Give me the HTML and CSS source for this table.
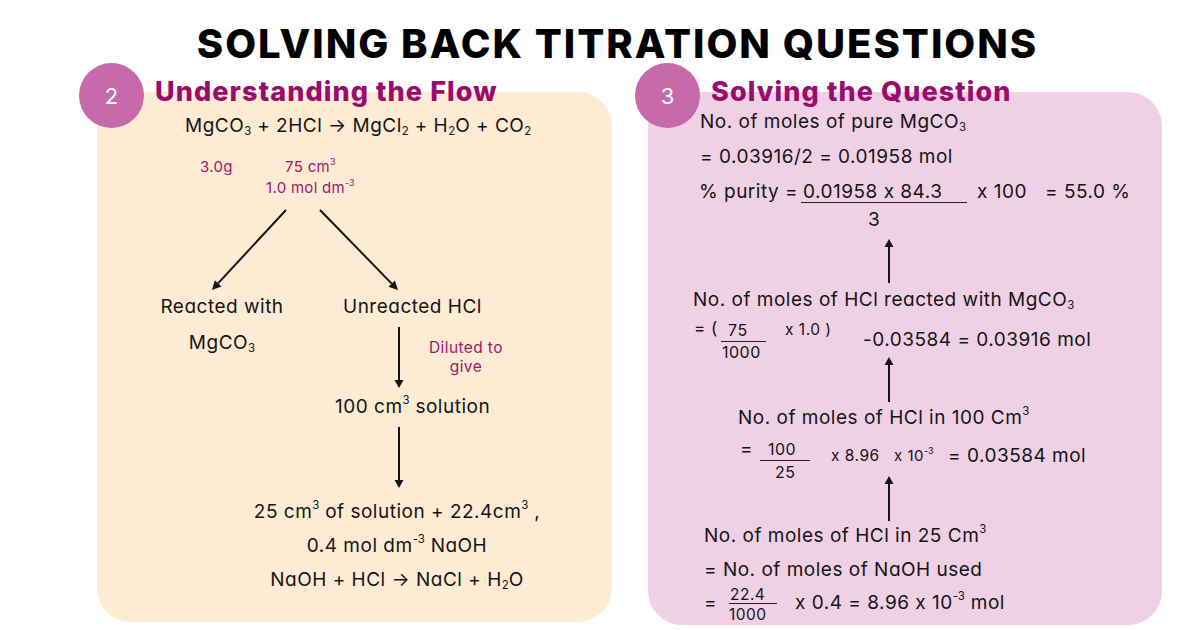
FILE: index.html
```html
<!DOCTYPE html>
<html lang="en">
<head>
<meta charset="utf-8">
<title>Solving Back Titration Questions</title>
<link rel="stylesheet" href="styles.css">
</head>
<body>
<main class="sheet">
  <h1 class="title">SOLVING BACK TITRATION QUESTIONS</h1>
  <div class="cols">
    <section class="card">
      <header class="card-head">
        <span class="badge">2</span>
        <h2 class="card-title">Understanding the Flow</h2>
      </header>
      <div class="panel panel-peach">
        <p class="eq">MgCO<sub>3</sub> + 2HCl → MgCl<sub>2</sub> + H<sub>2</sub>O + CO<sub>2</sub></p>
        <div class="qty">
          <span class="qty-mass">3.0g</span>
          <span class="qty-acid">75 cm<sup>3</sup><br>1.0 mol dm<sup>-3</sup></span>
        </div>
        <svg class="split" viewBox="0 0 515 83" aria-hidden="true">
          <line x1="189" y1="4" x2="121" y2="77.4" class="stroke"/>
          <polygon points="115,84 124.4,80.5 117.8,74.3" class="head"/>
          <line x1="223" y1="4" x2="294.7" y2="77.6" class="stroke"/>
          <polygon points="301,84 291.5,80.7 297.9,74.5" class="head"/>
        </svg>
        <div class="branch">
          <div class="branch-left">Reacted with<br>MgCO<sub>3</sub></div>
          <div class="branch-right">
            <div class="node">Unreacted HCl</div>
            <div class="step">
              <svg class="arrow-down" viewBox="0 0 14 61" aria-hidden="true">
                <line x1="7" y1="0" x2="7" y2="54" class="stroke"/>
                <polygon points="2.5,53 11.5,53 7,61" class="head"/>
              </svg>
              <span class="note">Diluted to<br>give</span>
            </div>
            <div class="node node-shift">100 cm<sup>3</sup> solution</div>
            <div class="step">
              <svg class="arrow-down" viewBox="0 0 14 61" aria-hidden="true">
                <line x1="7" y1="0" x2="7" y2="54" class="stroke"/>
                <polygon points="2.5,53 11.5,53 7,61" class="head"/>
              </svg>
            </div>
          </div>
        </div>
        <div class="result">
          <p>25 cm<sup>3</sup> of solution + 22.4cm<sup>3</sup> ,</p>
          <p>0.4 mol dm<sup>-3</sup> NaOH</p>
          <p>NaOH + HCl → NaCl + H<sub>2</sub>O</p>
        </div>
      </div>
    </section>

    <section class="card">
      <header class="card-head">
        <span class="badge">3</span>
        <h2 class="card-title">Solving the Question</h2>
      </header>
      <div class="panel panel-pink">
        <p class="line pad-52">No. of moles of pure MgCO<sub>3</sub></p>
        <p class="line pad-52">= 0.03916/2 = 0.01958 mol</p>
        <div class="calc calc-purity">
          <span class="lead-purity">% purity =</span>
          <span class="frac frac-purity"><span class="num">0.01958 x 84.3</span><span class="den">3</span></span>
          <span class="times-100">x 100</span>
          <span class="res">= 55.0 %</span>
        </div>
        <svg class="arrow-up up-1" viewBox="0 0 14 44" aria-hidden="true">
          <line x1="7" y1="7" x2="7" y2="44" class="stroke"/>
          <polygon points="2.5,8 11.5,8 7,0" class="head"/>
        </svg>
        <p class="line-34 pad-45">No. of moles of HCl reacted with MgCO<sub>3</sub></p>
        <div class="calc calc-hcl">
          <span class="lead-paren">= (</span>
          <span class="frac frac-75"><span class="num">75</span><span class="den">1000</span></span>
          <span class="times-10">x 1.0 )</span>
          <span class="res res-low">-0.03584 = 0.03916 mol</span>
        </div>
        <svg class="arrow-up up-2" viewBox="0 0 14 45" aria-hidden="true">
          <line x1="7" y1="7" x2="7" y2="45" class="stroke"/>
          <polygon points="2.5,8 11.5,8 7,0" class="head"/>
        </svg>
        <p class="line-32 pad-90">No. of moles of HCl in 100 Cm<sup>3</sup></p>
        <div class="calc calc-100">
          <span class="lead-eq">=</span>
          <span class="frac frac-100"><span class="num">100</span><span class="den">25</span></span>
          <span class="times-896">x 8.96</span>
          <span class="times-exp">x 10<sup>-3</sup></span>
          <span class="res res-mid">= 0.03584 mol</span>
        </div>
        <svg class="arrow-up up-3" viewBox="0 0 14 45" aria-hidden="true">
          <line x1="7" y1="7" x2="7" y2="45" class="stroke"/>
          <polygon points="2.5,8 11.5,8 7,0" class="head"/>
        </svg>
        <p class="line-34 pad-56 nudge-up">No. of moles of HCl in 25 Cm<sup>3</sup></p>
        <p class="line-34 pad-56">= No. of moles of NaOH used</p>
        <div class="calc calc-naoh">
          <span class="lead-eq2">=</span>
          <span class="frac frac-224"><span class="num">22.4</span><span class="den">1000</span></span>
          <span class="res res-last">x 0.4 = 8.96 x 10<sup>-3</sup> mol</span>
        </div>
      </div>
    </section>
  </div>
</main>
</body>
</html>
```

FILE: styles.css
```css
* { box-sizing: border-box; }

html, body { margin: 0; padding: 0; }

body {
  width: 1200px;
  height: 630px;
  overflow: hidden;
  background: #ffffff;
  color: #151515;
  font-family: Inter, "Open Sans", "DejaVu Sans", sans-serif;
  font-feature-settings: "cv11" 1, "calt" 0;
}

.sheet { width: 1200px; height: 630px; }

.title {
  margin: 0;
  padding: 20px 0 0 35px;
  text-align: center;
  font: 800 40px/48px Inter, "Open Sans", sans-serif;
  letter-spacing: 2px;
  color: #000;
}

.cols {
  display: grid;
  grid-template-columns: 533px 527px;
  column-gap: 23px;
  padding-left: 79px;
  margin-top: -5px;
}

.card-head {
  position: relative;
  z-index: 1;
  display: flex;
  align-items: center;
  height: 65px;
}

.badge {
  flex: none;
  width: 65px;
  height: 65px;
  border-radius: 50%;
  background: #c66aab;
  color: #fff;
  display: flex;
  align-items: center;
  justify-content: center;
  font-size: 22px;
  font-weight: 400;
}

.card-title {
  margin: 0 0 7px 11px;
  font: 800 27px/30px Inter, "Open Sans", sans-serif;
  letter-spacing: 1.1px;
  color: #9b0b6d;
}

.panel { margin-top: -36px; border-radius: 34px; letter-spacing: 0.5px; }

.panel-peach {
  margin-left: 18px;
  width: 515px;
  height: 530px;
  background: #fdebd3;
  padding-top: 22px;
}

.panel-pink {
  margin-left: 13px;
  width: 514px;
  height: 533px;
  background: #efd0e5;
  padding-top: 12px;
  font-size: 19px;
}

sub, sup { font-size: 0.6em; line-height: 0; letter-spacing: 0; }
sub { vertical-align: -0.3em; }
sup { vertical-align: 0.75em; }

.stroke { stroke: #151515; stroke-width: 2; }
.head { fill: #151515; }

/* left panel */
.eq { margin: 0 0 0 88px; font-size: 19px; line-height: 24px; }

.qty {
  display: flex;
  margin-top: 18px;
  padding-left: 103px;
  color: #a1166f;
  font-size: 15px;
  line-height: 21px;
  letter-spacing: 0.3px;
}
.qty-mass { width: 66px; }
.qty-acid { text-align: center; }

.split { display: block; margin-top: 8px; width: 515px; height: 83px; overflow: visible; }

.branch {
  display: grid;
  grid-template-columns: 130px auto;
  column-gap: 56px;
  padding-left: 60px;
  font-size: 19px;
  line-height: 36px;
}
.branch-left { text-align: center; white-space: nowrap; }
.node { white-space: nowrap; }

.step { display: flex; margin-top: 2px; height: 61px; }
.arrow-down { flex: none; display: block; margin-left: 49px; width: 14px; height: 61px; }
.note {
  margin-left: 23px;
  padding-top: 11px;
  color: #a1166f;
  font-size: 15.5px;
  line-height: 19px;
  letter-spacing: 0.4px;
  text-align: center;
}
.node-shift { margin-left: -8px; margin-top: 1px; }

.result {
  margin-top: 7px;
  padding-left: 85px;
  text-align: center;
  font-size: 19px;
  line-height: 34px;
}
.result p { margin: 0; }

/* right panel */
.line { margin: 0; line-height: 35px; }
.line-34 { margin: 0; line-height: 34px; }
.line-32 { margin: 0; line-height: 32px; }
.pad-52 { padding-left: 52px; }
.pad-45 { padding-left: 45px; }
.pad-90 { padding-left: 90px; }
.pad-56 { padding-left: 56px; }
.nudge-up { margin-top: -2px; }

.calc { display: flex; align-items: flex-start; line-height: 20px; white-space: nowrap; }
.frac { display: flex; flex-direction: column; flex: none; }
.num { border-bottom: 1px solid #222; }

.calc-purity { margin-top: 8px; padding-left: 51px; }
.lead-purity { width: 102px; flex: none; }
.frac-purity { width: 166px; }
.frac-purity .num { padding-left: 2px; }
.frac-purity .den { margin-top: 7px; text-align: center; padding-right: 20px; }
.times-100 { width: 68px; flex: none; margin-left: 10px; }

.arrow-up { display: block; width: 14px; margin-left: 234px; overflow: visible; }
.up-1 { height: 44px; margin-top: 9px; }
.up-2 { height: 45px; margin-top: -5px; }
.up-3 { height: 45px; margin-top: -6px; }

.calc-hcl { padding-left: 46px; }
.lead-paren { width: 27px; flex: none; margin-top: 1px; font-size: 17px; }
.frac-75 { width: 45px; font-size: 16px; }
.frac-75 .num { margin-top: 2px; line-height: 22px; padding-left: 7px; }
.frac-75 .den { padding-left: 1px; }
.times-10 { width: 78px; flex: none; margin: 3px 0 0 19px; font-size: 15.5px; }
.res-low { margin-top: 13px; }

.calc-100 { padding-left: 92px; }
.lead-eq { width: 20px; flex: none; margin-top: 5px; }
.frac-100 { width: 50px; font-size: 16px; }
.frac-100 .num { margin-top: 5px; line-height: 21px; padding-left: 8px; }
.frac-100 .den { margin-top: 1px; padding-left: 15px; }
.times-896 { width: 63px; flex: none; margin: 12px 0 0 21px; font-size: 15.5px; }
.times-exp { width: 54px; flex: none; margin-top: 12px; font-size: 15px; }
.res-mid { margin-top: 12px; }

.calc-naoh { padding-left: 56px; }
.lead-eq2 { width: 25px; flex: none; margin-top: 6px; }
.frac-224 { width: 48px; font-size: 15.5px; }
.frac-224 .num { line-height: 16px; padding-left: 1px; }
.frac-224 .den { margin-top: 1px; }
.res-last { margin: 6px 0 0 18px; }
```
